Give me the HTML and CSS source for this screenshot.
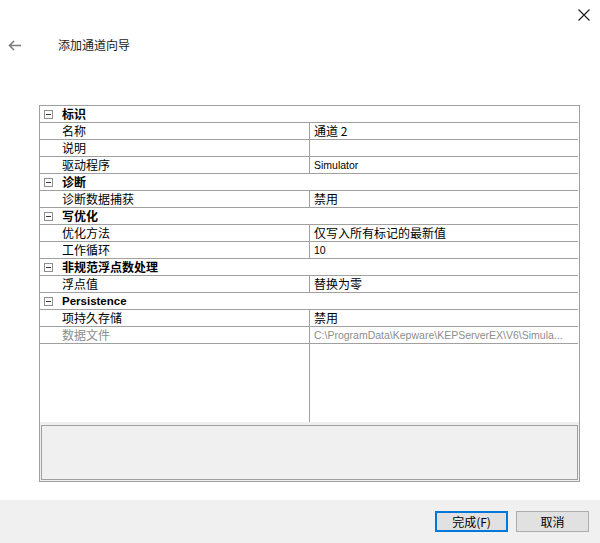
FILE: index.html
```html
<!DOCTYPE html>
<html lang="zh-CN">
<head>
<meta charset="utf-8">
<title>添加通道向导</title>
<link rel="stylesheet" href="styles.css">
</head>
<body>
<div class="window">
  <div class="titlebar">
    <span class="close" aria-label="关闭">
      <svg width="12" height="12" viewBox="0 0 12 12"><path d="M0.5 0.5L11.5 11.5M11.5 0.5L0.5 11.5" stroke="#1a1a1a" stroke-width="1.1" fill="none"/></svg>
    </span>
  </div>
  <div class="nav">
    <span class="back">
      <svg width="14" height="11" viewBox="0 0 14 11"><path d="M13 5.5H1.5M6 1L1.5 5.5L6 10" stroke="#7a7a7a" stroke-width="1.5" fill="none"/></svg>
    </span>
    <span class="title">添加通道向导</span>
  </div>

  <div class="grid">
    <div class="rows">
      <div class="row cat"><span class="toggle"></span><span class="catname">标识</span></div>
      <div class="row"><span class="name">名称</span><span class="value">通道 2</span></div>
      <div class="row"><span class="name">说明</span><span class="value"></span></div>
      <div class="row"><span class="name">驱动程序</span><span class="value lat">Simulator</span></div>
      <div class="row cat"><span class="toggle"></span><span class="catname">诊断</span></div>
      <div class="row"><span class="name">诊断数据捕获</span><span class="value">禁用</span></div>
      <div class="row cat"><span class="toggle"></span><span class="catname">写优化</span></div>
      <div class="row"><span class="name">优化方法</span><span class="value">仅写入所有标记的最新值</span></div>
      <div class="row"><span class="name">工作循环</span><span class="value lat">10</span></div>
      <div class="row cat"><span class="toggle"></span><span class="catname">非规范浮点数处理</span></div>
      <div class="row"><span class="name">浮点值</span><span class="value">替换为零</span></div>
      <div class="row cat"><span class="toggle"></span><span class="catname lat">Persistence</span></div>
      <div class="row"><span class="name">项持久存储</span><span class="value">禁用</span></div>
      <div class="row disabled"><span class="name">数据文件</span><span class="value lat">C:\ProgramData\Kepware\KEPServerEX\V6\Simula...</span></div>
    </div>
    <div class="filler"><div class="filler-left"></div></div>
    <div class="desc"><div class="desc-box"></div></div>
  </div>

  <div class="spacer"></div>
  <div class="footer">
    <button class="btn primary">完成(F)</button>
    <button class="btn">取消</button>
  </div>
</div>
</body>
</html>
```

FILE: styles.css
```css
html, body {
  margin: 0;
  padding: 0;
  background: #ffffff;
}
body {
  font-family: "Noto Sans CJK SC", "Liberation Sans", sans-serif;
  font-size: 12px;
  color: #000;
}
.window {
  width: 600px;
  height: 543px;
  display: flex;
  flex-direction: column;
  overflow: hidden;
}
.titlebar {
  height: 30px;
  display: flex;
  justify-content: flex-end;
}
.close {
  display: block;
  width: 12px;
  height: 12px;
  margin-top: 9px;
  margin-right: 10px;
}
.close svg { display: block; }
.nav {
  height: 30px;
  display: flex;
  align-items: center;
  padding-left: 8px;
}
.back {
  display: block;
  width: 14px;
  height: 11px;
  margin-right: 36px;
}
.back svg { display: block; }
.title {
  font-size: 12px;
  line-height: 16px;
  color: #1a1a1a;
}
.grid {
  margin-top: 45px;
  margin-left: 39px;
  width: 539px;
  height: 375px;
  border: 1px solid #a0a0a0;
  display: flex;
  flex-direction: column;
}
.rows {
  display: flex;
  flex-direction: column;
  margin-right: 1px;
}
.row {
  height: 16px;
  border-bottom: 1px solid #a0a0a0;
  display: flex;
  align-items: stretch;
  line-height: 16px;
}
.name {
  width: 247px;
  padding-left: 22px;
  white-space: nowrap;
}
.value {
  flex: 1;
  border-left: 1px solid #a0a0a0;
  padding-left: 4px;
  white-space: nowrap;
  overflow: hidden;
}
.lat {
  font-family: "Liberation Sans", "Noto Sans CJK SC", sans-serif;
  font-size: 10.5px;
}
.disabled { color: #8d8d8d; }
.cat { align-items: center; }
.toggle {
  position: relative;
  width: 7px;
  height: 7px;
  border: 1px solid #8e8f8f;
  margin-left: 4px;
  margin-right: 9px;
  background: #fff;
}
.toggle::after {
  content: "";
  position: absolute;
  left: 1px;
  top: 3px;
  width: 5px;
  height: 1px;
  background: #3a3a3a;
}
.catname {
  font-weight: bold;
  line-height: 16px;
  white-space: nowrap;
}
.catname.lat {
  font-size: 11.5px;
}
.filler {
  flex: 1;
  display: flex;
}
.filler-left {
  width: 269px;
  border-right: 1px solid #a0a0a0;
}
.desc {
  height: 59px;
  background: #f0f0f0;
  padding: 3px 1px 1px 1px;
  box-sizing: border-box;
  display: flex;
}
.desc-box {
  flex: 1;
  border: 1px solid #a0a0a0;
}
.spacer { flex: 1; }
.footer {
  height: 43px;
  background: #f0f0f0;
  display: flex;
  justify-content: flex-end;
  align-items: flex-start;
  padding-top: 11px;
  padding-right: 11px;
  box-sizing: border-box;
  gap: 8px;
}
.btn {
  width: 73px;
  height: 21px;
  margin: 0;
  padding: 0;
  background: #e1e1e1;
  border: 1px solid #adadad;
  font-family: "Noto Sans CJK SC", "Liberation Sans", sans-serif;
  font-size: 12px;
  line-height: 17px;
  color: #000;
}
.btn.primary {
  border: 2px solid #0078d7;
}
```
